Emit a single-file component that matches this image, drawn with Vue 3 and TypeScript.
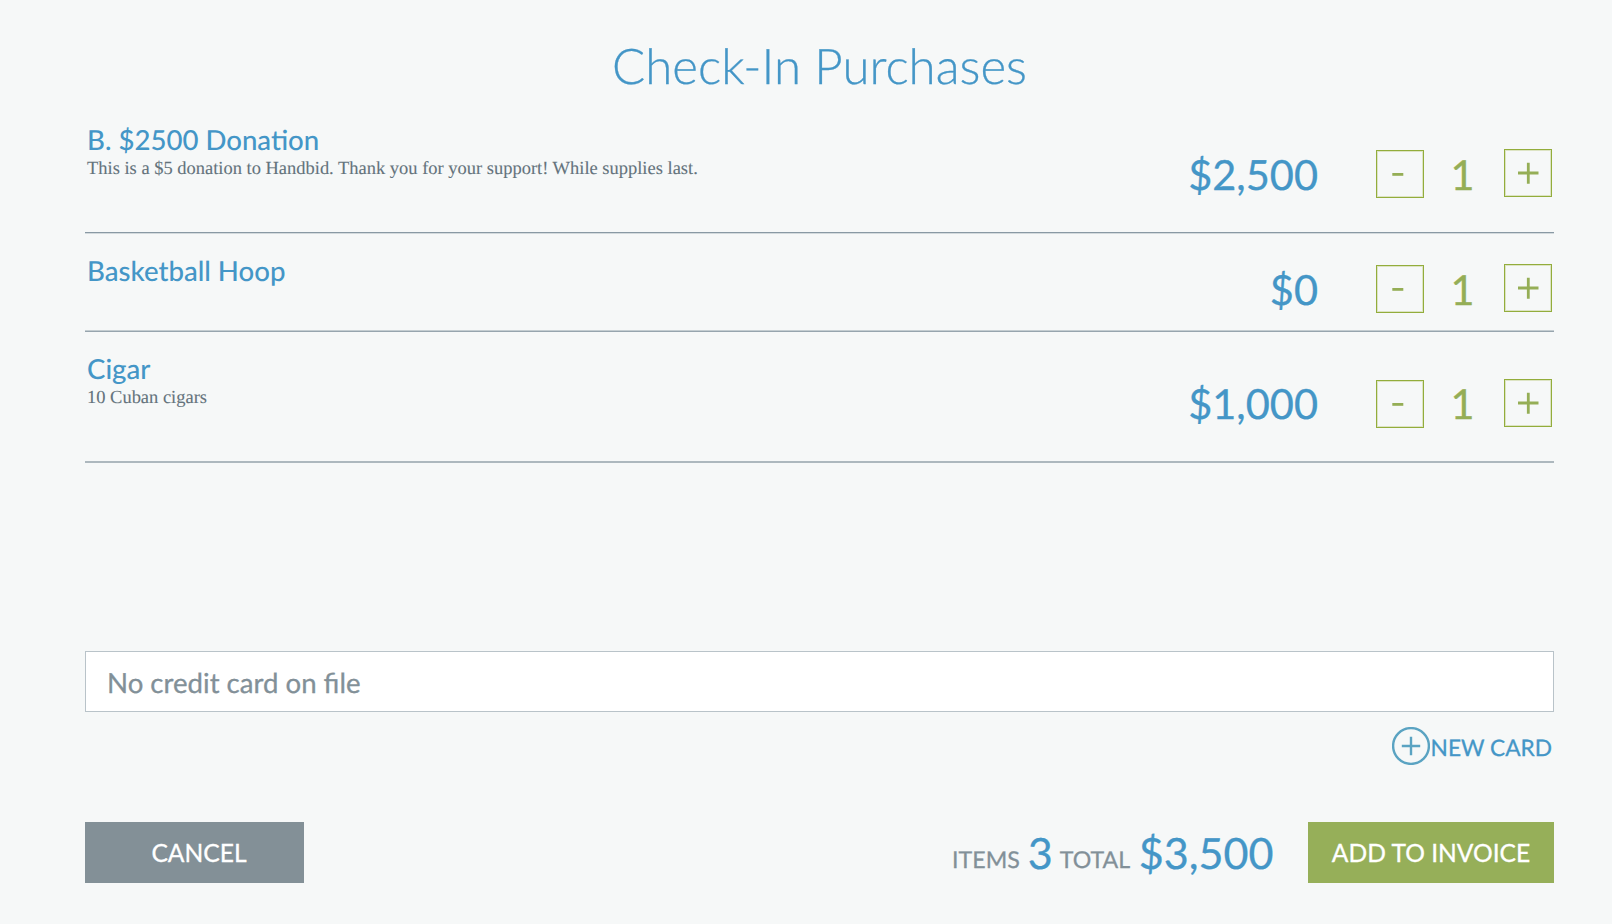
<script setup lang="ts">
import { computed, ref } from 'vue'

interface Purchase {
  name: string
  description?: string
  price: number
  quantity: number
  size: 'tall' | 'short'
  rule: 'upper' | 'lower' | 'even'
}

const purchases = ref<Purchase[]>([
  {
    name: 'B. $2500 Donation',
    description: 'This is a $5 donation to Handbid. Thank you for your support! While supplies last.',
    price: 2500,
    quantity: 1,
    size: 'tall',
    rule: 'upper',
  },
  { name: 'Basketball Hoop', price: 0, quantity: 1, size: 'short', rule: 'lower' },
  { name: 'Cigar', description: '10 Cuban cigars', price: 1000, quantity: 1, size: 'tall', rule: 'even' },
])

const itemCount = computed(() => purchases.value.reduce((sum, p) => sum + p.quantity, 0))
const total = computed(() => purchases.value.reduce((sum, p) => sum + p.quantity * p.price, 0))

const money = (value: number): string => '$' + value.toLocaleString('en-US')

function change(item: Purchase, delta: number): void {
  item.quantity = Math.max(0, item.quantity + delta)
}
</script>

<template>
  <main class="page">
    <h1 class="title"><span>Check-In Purchases</span></h1>

    <ul class="list">
      <li v-for="item in purchases" :key="item.name" class="row" :class="[item.size, item.rule]">
        <div class="info">
          <h2 class="name">{{ item.name }}</h2>
          <p v-if="item.description" class="description">{{ item.description }}</p>
        </div>
        <div class="price">{{ money(item.price) }}</div>
        <button class="step minus" aria-label="Remove one" @click="change(item, -1)">
          <svg viewBox="0 0 48 48"><path d="M16.3 24.4H27.3" /></svg>
        </button>
        <div class="quantity">{{ item.quantity }}</div>
        <button class="step plus" aria-label="Add one" @click="change(item, 1)">
          <svg viewBox="0 0 48 48"><path d="M14 24H34.5M24.3 13.7V34.7" /></svg>
        </button>
      </li>
    </ul>

    <div class="card-field">No credit card on file</div>

    <div class="new-card">
      <svg class="circle-plus" viewBox="0 0 38 38">
        <circle cx="19" cy="19" r="17.9" />
        <path d="M9.8 19H28.2M19 9.8V28.2" />
      </svg>
      <span class="new-card-label">NEW CARD</span>
    </div>

    <footer class="footer">
      <button class="action cancel">CANCEL</button>
      <div class="summary">
        <span class="label items">ITEMS</span>
        <span class="figure count">{{ itemCount }}</span>
        <span class="label">TOTAL</span>
        <span class="figure sum">{{ money(total) }}</span>
      </div>
      <button class="action add">ADD TO INVOICE</button>
    </footer>
  </main>
</template>

<style>
body {
  margin: 0;
  background: #f6f8f8;
}
</style>

<style scoped>
.page {
  box-sizing: border-box;
  width: 1612px;
  height: 924px;
  padding: 0 58px 0 85px;
  display: flex;
  flex-direction: column;
  overflow: hidden;
  background: #f6f8f8;
  font-family: Lato, "Liberation Sans", sans-serif;
  color: #4496c7;
  text-rendering: geometricPrecision;
  -webkit-text-stroke-width: 0.3px;
}

.title {
  margin: 0;
  height: 103px;
  padding-top: 36px;
  box-sizing: border-box;
  text-align: center;
  font-size: 49.2px;
  line-height: 60px;
  font-weight: 300;
}

.list {
  list-style: none;
  margin: 0;
  padding: 0;
}

.row {
  box-sizing: border-box;
  display: flex;
  align-items: center;
  padding: 13px 2px 0 2px;
  border-bottom: 1px solid #adb8be;
  box-shadow: inset 0 -1px #adb8be;
}

.upper {
  padding-top: 12px;
  padding-bottom: 1px;
  border-bottom-color: #d3dadd;
  box-shadow: inset 0 -1px #8999a4;
}

.lower {
  border-bottom-color: #97a5ae;
  box-shadow: inset 0 -1px #c4cdd1;
}

.tall {
  height: 131px;
}

.short {
  height: 98px;
}

.info {
  flex: 1;
  align-self: flex-start;
  padding-top: 8px;
}

.upper .info {
  padding-top: 9px;
}

.name {
  margin: 0;
  font-size: 27.6px;
  line-height: 32px;
  font-weight: 500;
  -webkit-text-stroke-width: 0;
}

.description {
  margin: 0;
  font-family: "Liberation Serif", serif;
  font-size: 18.48px;
  line-height: 24px;
  color: #64737c;
  -webkit-text-stroke-width: 0.1px;
}

.price {
  width: 160px;
  margin-right: 2px;
  text-align: right;
  font-size: 41.5px;
  line-height: 50px;
}

.even .price,
.even .quantity {
  padding-bottom: 2px;
}

.step {
  box-sizing: border-box;
  width: 48px;
  height: 48px;
  padding: 0;
  border: 1px solid #93ad3c;
  box-shadow: inset 0 0 0 1px #dde4c4;
  background: none;
}

.step svg {
  display: block;
  width: 48px;
  height: 48px;
  margin: -1px;
  fill: none;
  stroke: #95ae56;
  stroke-width: 2.8;
}

.minus {
  margin-left: 56px;
}

.plus {
  margin-bottom: 2px;
}

.quantity {
  box-sizing: border-box;
  width: 80px;
  padding-right: 3px;
  text-align: center;
  font-size: 41.5px;
  line-height: 50px;
  color: #95ae56;
}

.card-field {
  box-sizing: border-box;
  height: 61px;
  margin-top: 188px;
  padding: 1px 21px 0;
  border: 1px solid #b9c3c9;
  background: #fff;
  color: #829098;
  font-size: 27.6px;
  line-height: 59px;
}

.new-card {
  display: flex;
  justify-content: flex-end;
  height: 38px;
  margin: 15px 2px 0 0;
}

.circle-plus {
  width: 38px;
  height: 38px;
  margin-right: 1px;
  fill: none;
  stroke: #5aa3c2;
  stroke-width: 2.4;
}

.new-card-label {
  font-size: 22.7px;
  line-height: 42px;
}

.footer {
  display: flex;
  height: 61px;
  margin-top: 57px;
}

.action {
  height: 61px;
  padding: 1px 0 0;
  border: 0;
  color: #fff;
  font-family: inherit;
  font-size: 24.6px;
  line-height: 58px;
}

.cancel {
  width: 219px;
  padding-left: 9px;
  background: #839097;
}

.add {
  width: 246px;
  background: #96af59;
}

.summary {
  flex: 1;
  display: flex;
  justify-content: flex-end;
  padding-right: 34.5px;
}

.label {
  font-size: 23.2px;
  line-height: 74px;
  color: #829098;
}

.figure {
  font-size: 43.1px;
  line-height: 62px;
}

.count {
  margin: 0 7px 0 8px;
}

.sum {
  margin-left: 8.5px;
}
</style>
